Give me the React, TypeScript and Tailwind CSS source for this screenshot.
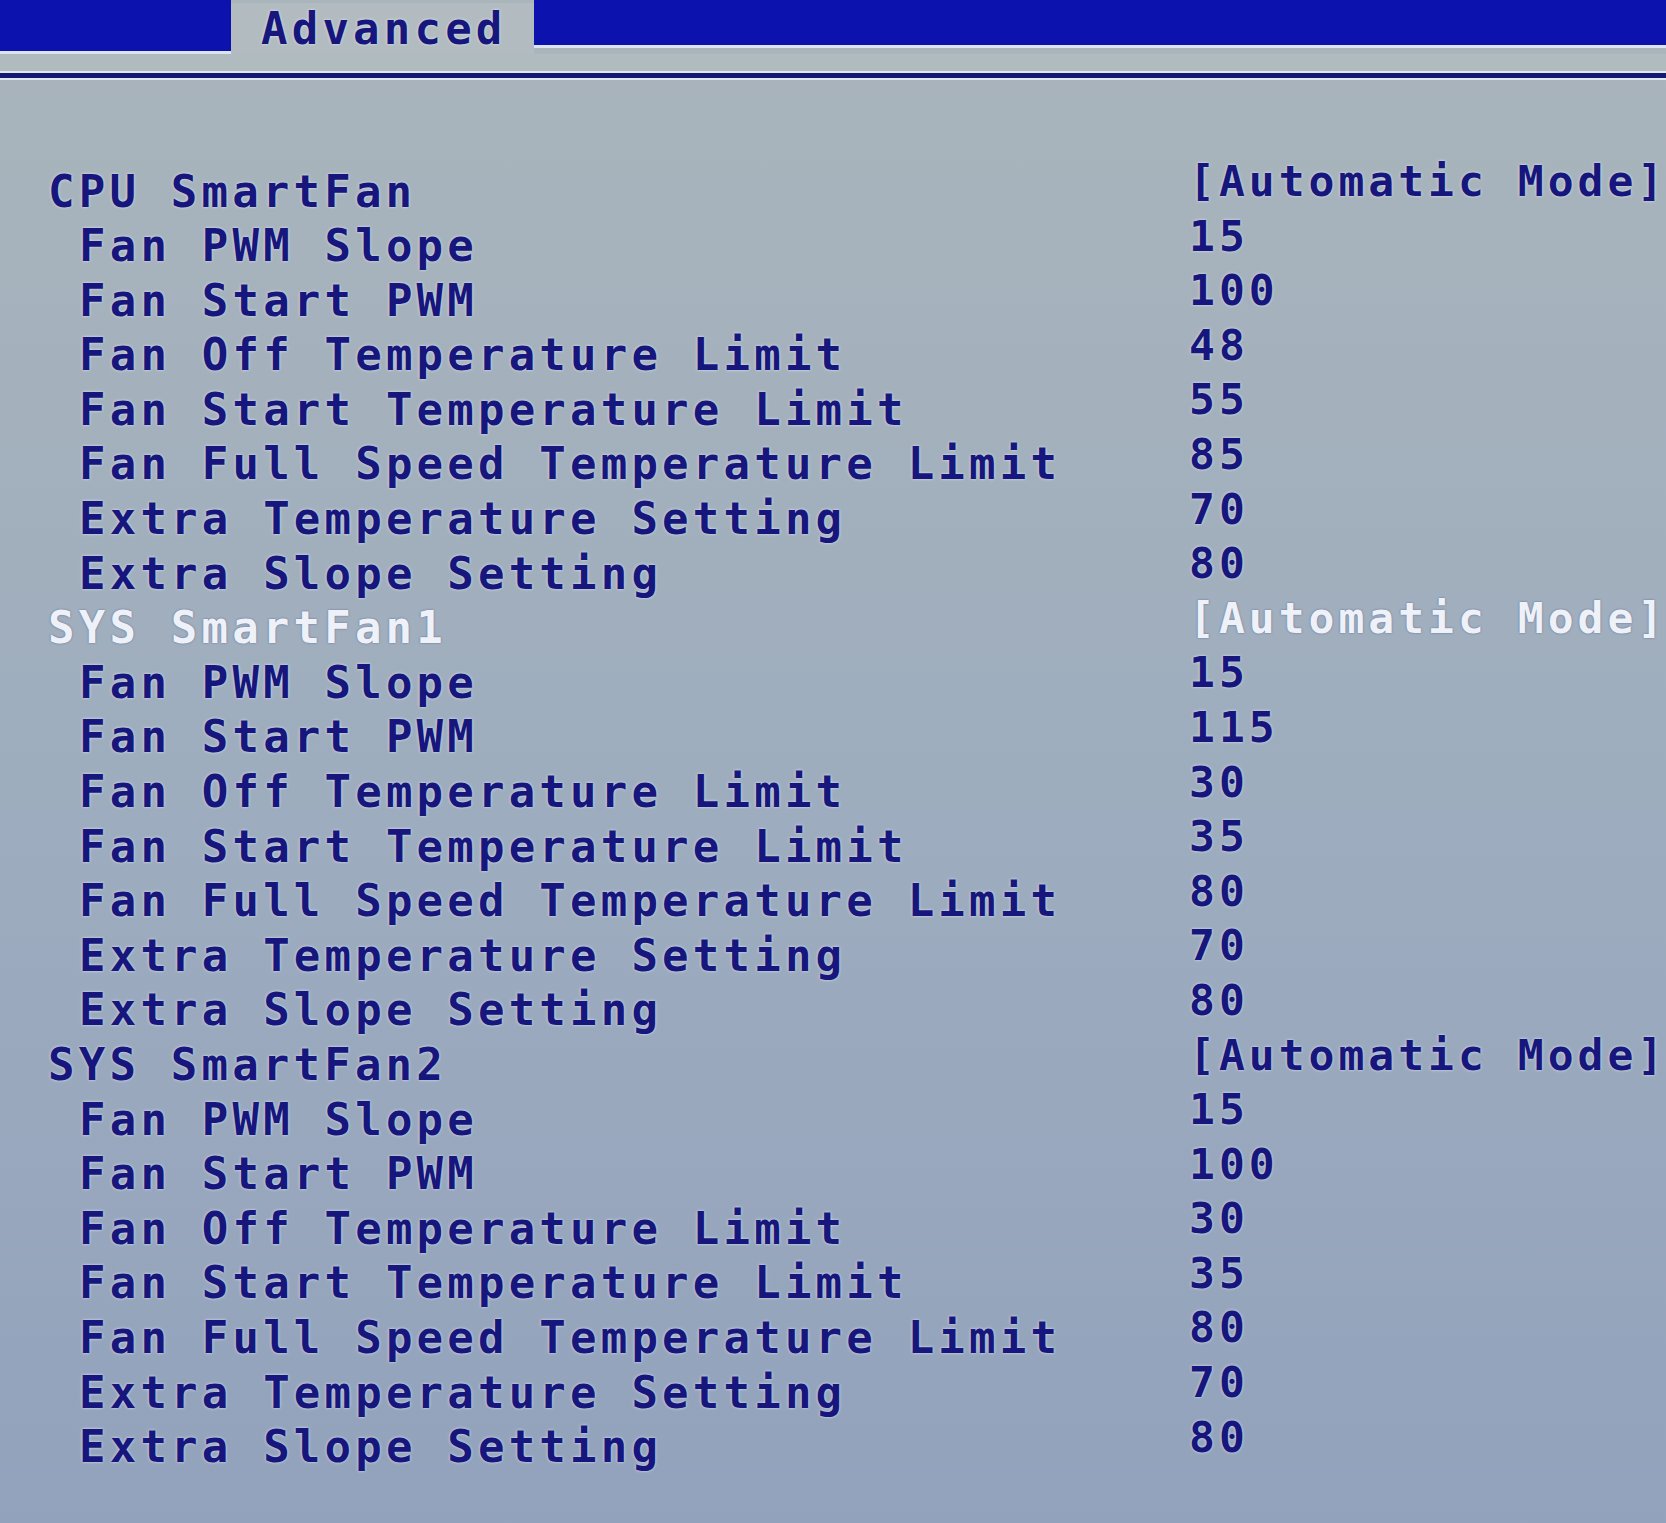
import React from "react";

type Row = { label: string; value: string; kind: "head" | "item"; active?: boolean };

const group = (name: string, vals: string[], active = false): Row[] => {
  const labels = [
    "Fan PWM Slope",
    "Fan Start PWM",
    "Fan Off Temperature Limit",
    "Fan Start Temperature Limit",
    "Fan Full Speed Temperature Limit",
    "Extra Temperature Setting",
    "Extra Slope Setting",
  ];
  return [
    { label: name, value: "[Automatic Mode]", kind: "head", active },
    ...labels.map((l, i) => ({ label: l, value: vals[i], kind: "item" as const })),
  ];
};

const rows: Row[] = [
  ...group("CPU SmartFan", ["15", "100", "48", "55", "85", "70", "80"]),
  ...group("SYS SmartFan1", ["15", "115", "30", "35", "80", "70", "80"], true),
  ...group("SYS SmartFan2", ["15", "100", "30", "35", "80", "70", "80"]),
];

const mono = "font-['DejaVu_Sans_Mono',monospace] font-bold";
const navy = "text-[#16167c] [text-shadow:0_0_3px_rgba(228,236,250,0.95)]";
const white = "text-[#eef2f8] [text-shadow:0_0_2px_rgba(30,40,120,0.55)]";

export default function App() {
  return (
    <div className="w-[1666px] h-[1523px] overflow-hidden bg-gradient-to-b from-[#aab5bb] via-[#9eadbe] to-[#92a2bc] flex flex-col">
      {/* title bar with the active tab */}
      <div className="flex h-[54px] items-stretch">
        <div className="w-[231px] bg-[#0b12ad] border-b-[3px] border-[#dce4f4]" />
        <div className={`w-[303px] mt-[3px] bg-[#b2bcc0] flex items-center pl-[30px] ${mono}`}>
          <span className={`text-[44px] tracking-[4.2px] leading-none ${navy}`}>Advanced</span>
        </div>
        <div className="flex-1 bg-[#0b12ad] border-b-[3px] border-[#dce4f4] mb-[6px]" />
      </div>
      <div className="h-[17px] bg-[#b0bbc0]" />
      <div className="h-[2px] bg-[#dfe6f4]" />
      <div className="h-[5px] bg-[#131a72]" />
      <div className="h-[2px] bg-[#dfe6f4]" />

      {/* settings list */}
      <div className={`pt-[80px] ${mono}`}>
        {rows.map((r, i) => (
          <div key={i} className="grid grid-cols-[1189px_1fr] h-[54.6px] items-center">
            <div
              className={`text-[44px] tracking-[4.2px] leading-none whitespace-nowrap ${
                r.kind === "head" ? "pl-[48px]" : "pl-[79px]"
              } ${r.active ? white : navy}`}
            >
              {r.label}
            </div>
            <div
              className={`pb-[20px] text-[43px] tracking-[4px] leading-none whitespace-nowrap ${
                r.active ? white : navy
              }`}
            >
              {r.value}
            </div>
          </div>
        ))}
      </div>
    </div>
  );
}
